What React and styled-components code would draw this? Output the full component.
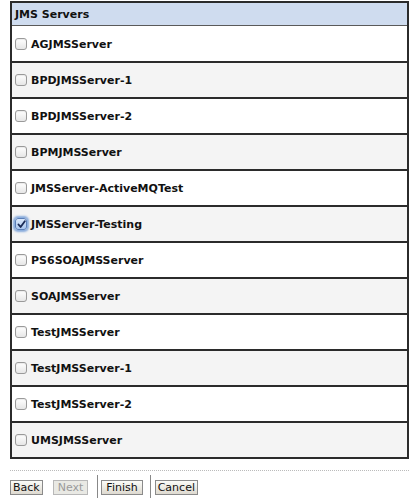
import React from "react";
import styled, { createGlobalStyle } from "styled-components";

const Global = createGlobalStyle`
  html, body { margin: 0; padding: 0; background: #fff; }
  body { font-family: "DejaVu Sans", Verdana, sans-serif; }
`;

const Page = styled.div`
  padding: 1px 3px 0 10px;
  width: 399px;
`;

const Table = styled.div`
  border: 2px solid #2b2b2b;
  display: flex;
  flex-direction: column;
`;

const Header = styled.div`
  height: 22px;
  background: #cfdcef;
  border-bottom: 1px solid #5a5a5a;
  display: flex;
  align-items: center;
  padding-left: 3px;
  font-size: 11px;
  font-weight: bold;
  color: #111;
`;

const Row = styled.label`
  height: 34px;
  display: flex;
  align-items: center;
  gap: 4px;
  padding-left: 3px;
  padding-top: ${(p) => (p.$first ? 1 : 0)}px;
  background: ${(p) => (p.$alt ? "#f4f4f4" : "#ffffff")};
  border-top: ${(p) => (p.$first ? "none" : "2px solid #2b2b2b")};
  font-size: 11px;
  font-weight: bold;
  color: #111;
`;

const Box = styled.span`
  width: 12px;
  height: 12px;
  border-radius: 3px;
  border: 1px solid ${(p) => (p.$checked ? "#5b7fb8" : "#9a9a9a")};
  box-sizing: border-box;
  display: inline-flex;
  align-items: center;
  justify-content: center;
  box-shadow: ${(p) => (p.$checked ? "0 0 2px 2px rgba(90,140,210,0.7)" : "inset 0 1px 1px rgba(0,0,0,0.08)")};
  background: ${(p) => (p.$checked ? "linear-gradient(#dbe8fa, #a9c6ee)" : "linear-gradient(#ffffff, #e6e6e6)")};
`;

const Divider = styled.div`
  margin-top: 11px;
  border-top: 1px dotted #bbb;
`;

const Bar = styled.div`
  display: flex;
  align-items: center;
  margin-top: 4px;
  height: 24px;
`;

const Btn = styled.button`
  font-family: "DejaVu Sans", Verdana, sans-serif;
  font-size: 11px;
  height: 15px;
  padding: 0 ${(p) => p.$px ?? 2}px;
  line-height: 13px;
  border: 1px solid ${(p) => (p.disabled ? "#b8b8b8" : "#8a8a8a")};
  background: ${(p) => (p.disabled ? "#e9e9e4" : "linear-gradient(#fbfbf8, #dedad0)")};
  color: ${(p) => (p.disabled ? "#9a9a9a" : "#111")};
  margin-right: ${(p) => p.$mr || 0}px;
  border-radius: 0;
  cursor: default;
`;

const Sep = styled.div`
  width: 1px;
  height: 24px;
  background: #888;
  margin: 0 ${(p) => p.$mr || 4}px 0 ${(p) => p.$ml || 0}px;
`;

const servers = [
  "AGJMSServer",
  "BPDJMSServer-1",
  "BPDJMSServer-2",
  "BPMJMSServer",
  "JMSServer-ActiveMQTest",
  "JMSServer-Testing",
  "PS6SOAJMSServer",
  "SOAJMSServer",
  "TestJMSServer",
  "TestJMSServer-1",
  "TestJMSServer-2",
  "UMSJMSServer",
];

const Check = () => (
  <svg width="9" height="9" viewBox="0 0 9 9">
    <path d="M1.5 4.5 L3.6 7 L7.8 1.2" fill="none" stroke="#1a2a55" strokeWidth="1.8" strokeLinecap="round" strokeLinejoin="round" />
  </svg>
);

export default function App() {
  return (
    <>
      <Global />
      <Page>
        <Table>
          <Header>JMS Servers</Header>
          {servers.map((s, i) => {
            const checked = s === "JMSServer-Testing";
            return (
              <Row key={s} $alt={i % 2 === 1} $first={i === 0}>
                <Box $checked={checked}>{checked && <Check />}</Box>
                {s}
              </Row>
            );
          })}
        </Table>
        <Divider />
        <Bar>
          <Btn $mr={10}>Back</Btn>
          <Btn disabled $px={4}>Next</Btn>
          <Sep $ml={9} $mr={3} />
          <Btn $px={4}>Finish</Btn>
          <Sep $ml={7} $mr={4} />
          <Btn>Cancel</Btn>
        </Bar>
      </Page>
    </>
  );
}
